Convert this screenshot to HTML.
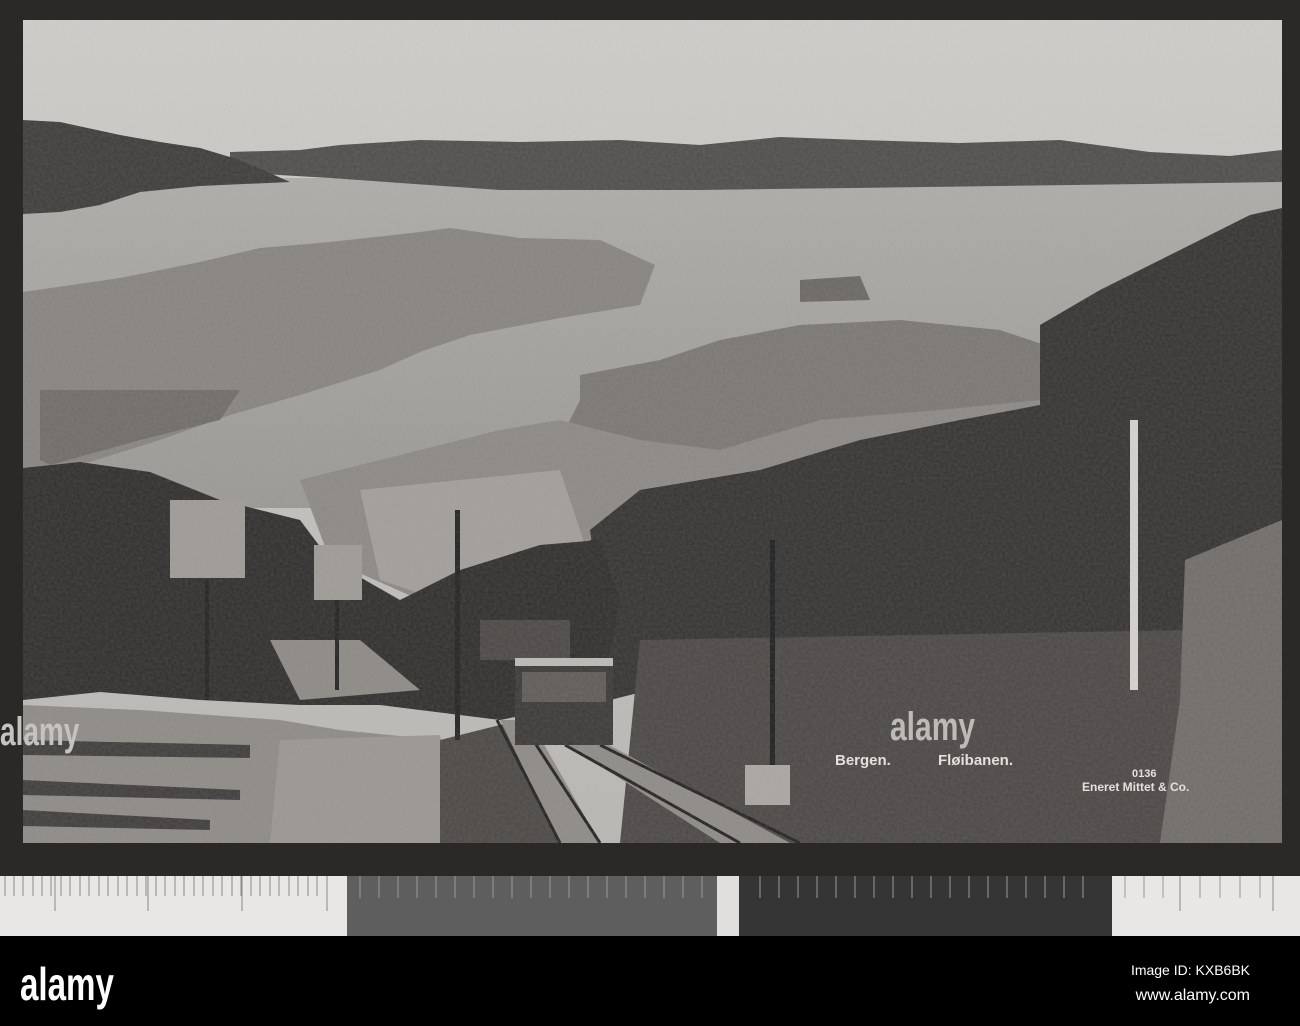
<!DOCTYPE html>
<html><head><meta charset="utf-8"><style>
html,body{margin:0;padding:0;width:1300px;height:1026px;overflow:hidden;background:#2a2928;}
svg{display:block}
</style></head><body>
<svg width="1300" height="1026" viewBox="0 0 1300 1026" xmlns="http://www.w3.org/2000/svg">
<defs>
<linearGradient id="sky" x1="0" y1="0" x2="0" y2="1"><stop offset="0" stop-color="#cfcdc9"/><stop offset="1" stop-color="#b9b7b3"/></linearGradient>
<linearGradient id="water" x1="0" y1="0" x2="0" y2="1"><stop offset="0" stop-color="#aeaca8"/><stop offset="1" stop-color="#9a9894"/></linearGradient>
<filter id="n" x="0" y="0" width="1" height="1"><feTurbulence type="fractalNoise" baseFrequency="0.35" numOctaves="2" seed="3"/><feColorMatrix values="0 0 0 0 0.5 0 0 0 0 0.5 0 0 0 0 0.5 0 0 0 0.3 0"/></filter>
<clipPath id="c"><rect x="23" y="20" width="1259" height="823"/></clipPath>
</defs>
<rect width="1300" height="1026" fill="#2a2928"/>
<g clip-path="url(#c)">
<rect x="23" y="20" width="1259" height="823" fill="url(#sky)"/>
<rect x="23" y="178" width="1259" height="330" fill="url(#water)"/>
<path d="M230 152 L300 150 L340 145 L420 140 L520 142 L620 140 L700 145 L780 137 L860 140 L960 143 L1060 140 L1150 152 L1230 156 L1282 150 L1282 182 L1000 186 L700 190 L500 190 L330 178 L230 172Z" fill="#4f4d4b"/>
<path d="M23 120 L60 122 L120 135 L160 142 L200 148 L240 160 L290 182 L200 186 L140 192 L100 205 L60 212 L23 214Z" fill="#3e3c3a"/>
<path d="M23 292 L120 278 L200 262 L260 248 L330 242 L420 232 L450 228 L520 238 L600 240 L655 265 L640 305 L560 318 L470 335 L420 352 L380 370 L300 395 L230 415 L160 440 L90 462 L23 470Z" fill="#878380"/>
<path d="M40 390 L240 390 L220 420 L140 440 L50 465 L40 460Z" fill="#6f6b68"/>
<path d="M800 280 L860 276 L870 300 L800 302Z" fill="#6a6764"/>
<path d="M580 375 L660 360 L720 340 L800 325 L900 320 L1000 330 L1045 345 L1045 420 L900 430 L760 460 L620 470 L560 440 L580 400Z" fill="#7a7673"/>
<path d="M300 480 L420 450 L500 430 L560 420 L640 440 L720 450 L820 420 L940 410 L1040 400 L1040 470 L860 490 L700 520 L580 560 L500 570 L420 600 L330 560Z" fill="#8c8885"/>
<path d="M360 490 L560 470 L590 560 L470 610 L380 580Z" fill="#a29e9a"/>
<path d="M1040 325 L1100 290 L1180 250 L1250 215 L1282 208 L1282 843 L760 843 L740 600 L680 560 L600 600 L590 530 L640 490 L760 470 L860 440 L960 420 L1040 405Z" fill="#353331"/>
<path d="M590 540 L760 520 L770 660 L610 700 L590 640Z" fill="#353331"/>
<path d="M640 640 L1190 630 L1170 843 L620 843Z" fill="#4a4745"/>
<path d="M1185 560 L1282 520 L1282 843 L1160 843 L1180 700Z" fill="#6f6c68"/>
<path d="M23 468 L80 462 L150 472 L220 500 L300 520 L330 560 L400 600 L460 570 L540 545 L600 540 L620 600 L600 700 L500 720 L380 705 L300 705 L200 700 L100 692 L23 700Z" fill="#302e2c"/>
<path d="M270 640 L360 640 L420 690 L300 700Z" fill="#8d8985"/>
<path d="M23 705 L140 710 L280 720 L340 730 L440 740 L470 780 L470 843 L23 843Z" fill="#8e8a86"/>
<path d="M23 740 L250 745 L250 758 L23 755Z M23 780 L240 790 L240 800 L23 795Z M23 810 L210 820 L210 830 L23 826Z" fill="#3f3d3b"/>
<path d="M280 740 L440 735 L460 843 L270 843Z" fill="#9a9692"/>
<path d="M440 740 L520 720 L560 843 L440 843Z" fill="#4a4744"/>
<path d="M500 720 L530 720 L600 843 L560 843Z M560 740 L600 740 L790 843 L720 843Z" fill="#8e8a86"/>
<path d="M497 720 L560 843 M520 720 L600 843 M565 745 L740 843 M600 745 L800 843" stroke="#222" stroke-width="3"/>
<rect x="480" y="620" width="90" height="40" fill="#4a4745"/>
<rect x="515" y="660" width="98" height="85" fill="#3b3937"/>
<rect x="515" y="658" width="98" height="8" fill="#bdb9b5"/>
<rect x="522" y="672" width="84" height="30" fill="#5e5a57"/>
<rect x="170" y="500" width="75" height="78" fill="#9e9a96"/>
<rect x="314" y="545" width="48" height="55" fill="#9e9a96"/>
<rect x="205" y="580" width="4" height="120" fill="#222"/>
<rect x="335" y="600" width="4" height="90" fill="#222"/>
<rect x="455" y="510" width="5" height="230" fill="#222"/>
<rect x="770" y="540" width="5" height="225" fill="#1e1e1e"/>
<rect x="745" y="765" width="45" height="40" fill="#aaa6a2"/>
<rect x="1130" y="420" width="8" height="270" fill="#d5d2ce"/>
<rect x="23" y="20" width="1259" height="823" filter="url(#n)" opacity="0.6"/>
</g>
<g font-family="Liberation Sans, sans-serif" font-weight="bold" fill="#e3e1dd">
<text x="835" y="765" font-size="15">Bergen.</text>
<text x="938" y="765" font-size="15">Fløibanen.</text>
<text x="1132" y="777" font-size="11">0136</text>
<text x="1082" y="791" font-size="12">Eneret Mittet &amp; Co.</text>
<text x="890" y="740" font-size="40" fill="#bdbbb8" transform="translate(890 740) scale(0.75 1) translate(-890 -740)">alamy</text>
<text x="0" y="745" font-size="40" fill="#c5c3c0" transform="translate(0 745) scale(0.7 1) translate(0 -745)">alamy</text>
</g>
<rect x="0" y="876" width="347" height="60" fill="#e8e7e5"/>
<rect x="347" y="876" width="370" height="60" fill="#5e5e5e"/>
<rect x="717" y="876" width="22" height="60" fill="#e0dfdd"/>
<rect x="739" y="876" width="373" height="60" fill="#353535"/>
<rect x="1112" y="876" width="188" height="60" fill="#e8e7e5"/>
<g stroke="#888" stroke-width="1">
<path d="M5 876v20M14 876v20M23 876v20M33 876v20M42 876v20M51 876v20M61 876v20M70 876v20M80 876v20M89 876v20M99 876v20M108 876v20M118 876v20M127 876v20M137 876v20M146 876v20M156 876v20M165 876v20M175 876v20M184 876v20M194 876v20M203 876v20M213 876v20M222 876v20M232 876v20M241 876v20M251 876v20M260 876v20M270 876v20M279 876v20M289 876v20M298 876v20M308 876v20M317 876v20M327 876v20"/>
<path d="M55 876v35M148 876v35M242 876v35M327 876v35M1180 876v35M1273 876v35"/>
</g>
<g stroke="#999" stroke-width="1">
<path d="M360 876v22M379 876v22M398 876v22M417 876v22M436 876v22M455 876v22M474 876v22M493 876v22M512 876v22M531 876v22M550 876v22M569 876v22M588 876v22M607 876v22M626 876v22M645 876v22M664 876v22M683 876v22M702 876v22M760 876v22M779 876v22M798 876v22M817 876v22M836 876v22M855 876v22M874 876v22M893 876v22M912 876v22M931 876v22M950 876v22M969 876v22M988 876v22M1007 876v22M1026 876v22M1045 876v22M1064 876v22M1083 876v22M1125 876v22M1144 876v22M1163 876v22M1200 876v22M1220 876v22M1240 876v22M1260 876v22"/>
</g>
<rect x="0" y="936" width="1300" height="90" fill="#000"/>
<text x="20" y="1000" font-family="Liberation Sans, sans-serif" font-weight="bold" font-size="46" fill="#fff" transform="translate(20 1000) scale(0.72 1) translate(-20 -1000)">alamy</text>
<text x="1250" y="975" text-anchor="end" font-family="Liberation Sans, sans-serif" font-size="14" fill="#fff">Image ID: KXB6BK</text>
<text x="1250" y="1000" text-anchor="end" font-family="Liberation Sans, sans-serif" font-size="16" fill="#fff">www.alamy.com</text>
</svg>
</body></html>
